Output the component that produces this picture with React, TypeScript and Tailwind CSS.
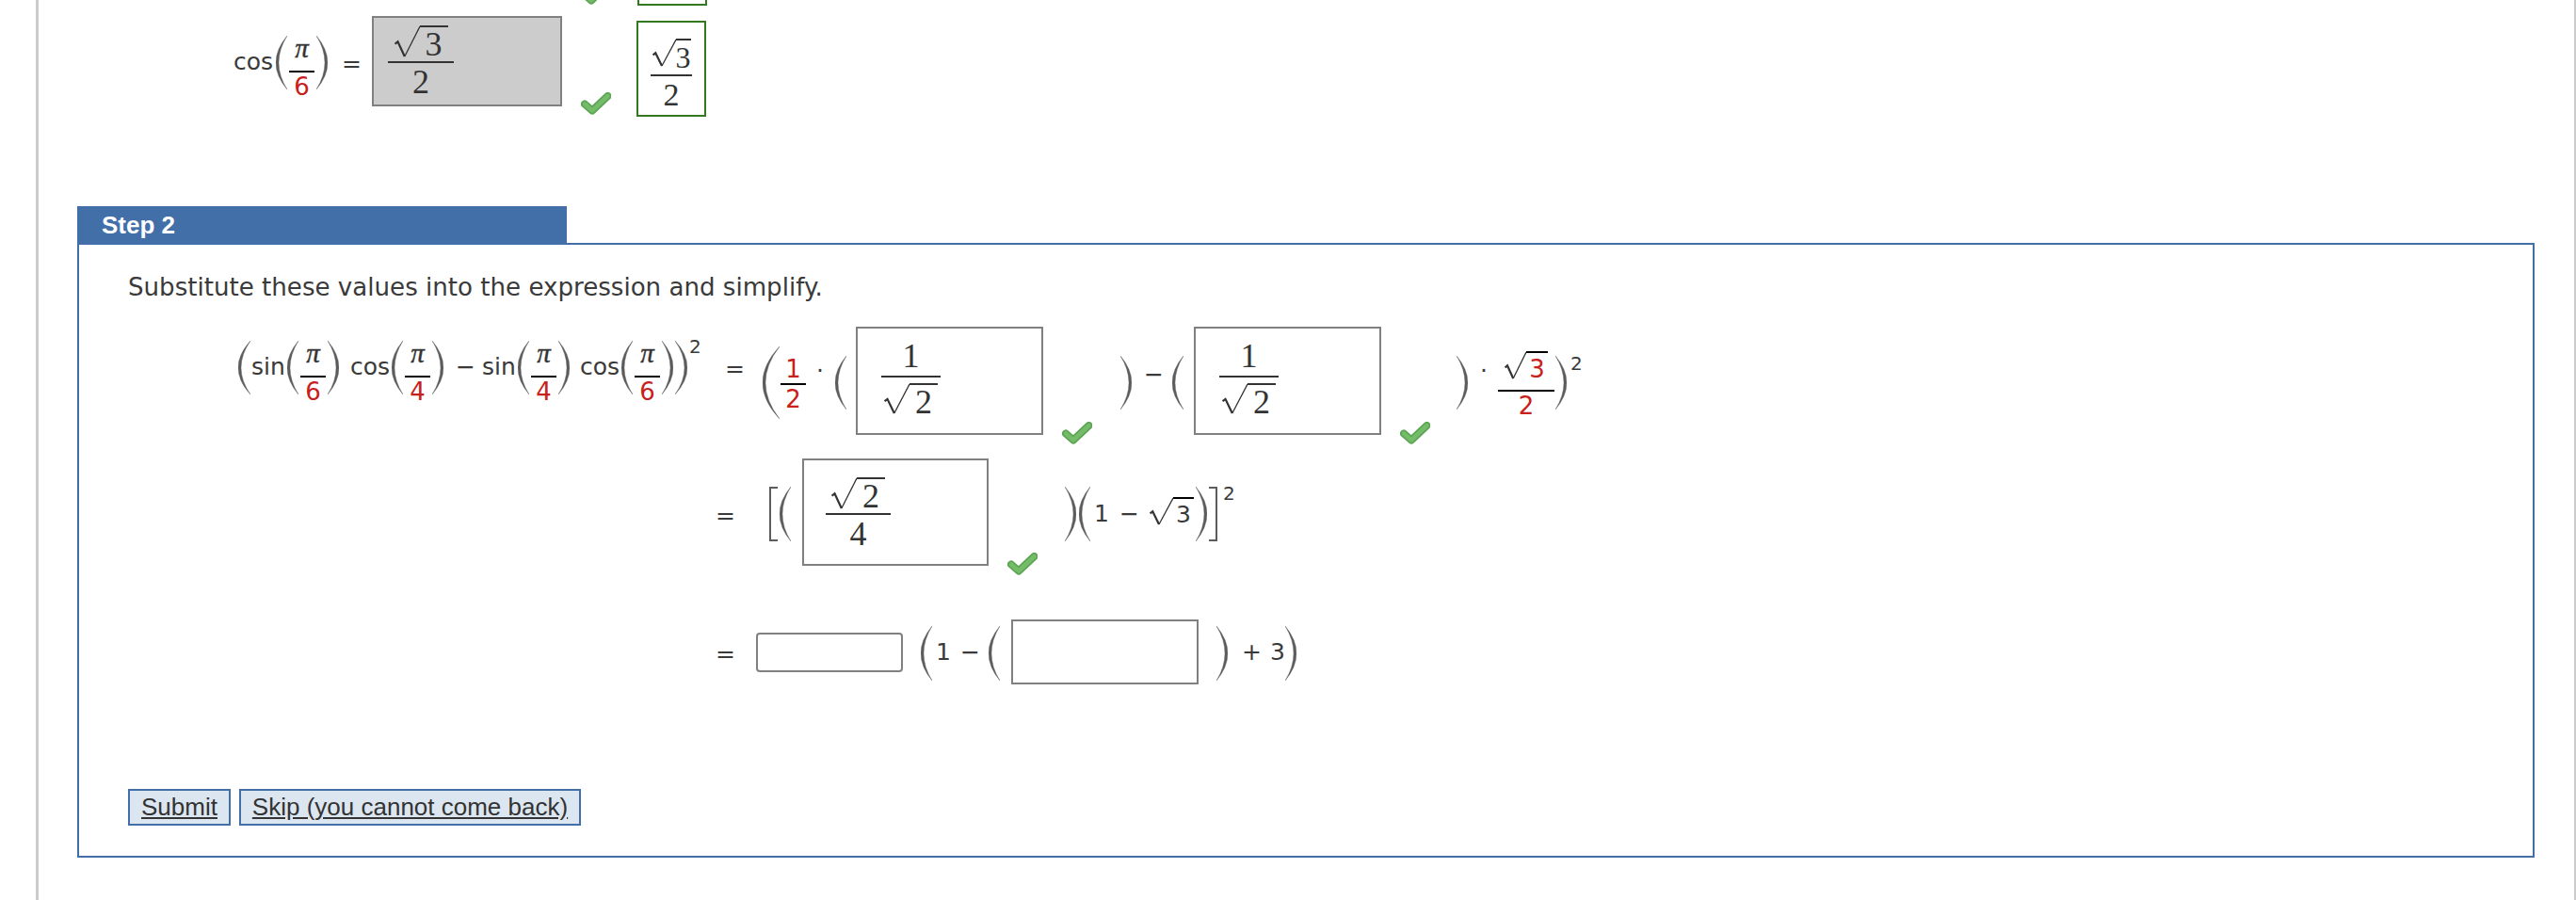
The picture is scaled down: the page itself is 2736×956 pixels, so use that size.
import type { ReactNode } from "react"

const sans = "font-['DejaVu_Sans',sans-serif]"
const serif = "font-['Liberation_Serif',serif]"

function Paren({ w = 12, h = 57, right = false, className = "" }: { w?: number; h?: number; right?: boolean; className?: string }) {
  return (
    <svg width={w} height={h} viewBox={`0 0 ${w} ${h}`} className={`shrink-0 ${right ? "-scale-x-100" : ""} ${className}`}>
      <path d={`M${w} 0 Q${-w} ${h / 2} ${w} ${h} Q${-w + 6} ${h / 2} ${w} 0 Z`} fill="#5c5c5c" stroke="#5c5c5c" strokeWidth="0.4" />
    </svg>
  )
}

function Check({ className = "" }: { className?: string }) {
  return (
    <svg width="32" height="24" viewBox="0 0 32 24" className={`shrink-0 ${className}`}>
      <path d="M4 12.5 L12 19.5 L28.5 4" fill="none" stroke="#5ca553" strokeWidth="8" strokeLinecap="round" strokeLinejoin="round" />
      <path d="M4 12.5 L12 19.5 L28.5 4" fill="none" stroke="#74bb6a" strokeWidth="4.5" strokeLinecap="round" strokeLinejoin="round" />
    </svg>
  )
}

// sans text on a 30px line, baseline sits 24px down
function T({ className = "", children }: { className?: string; children: ReactNode }) {
  return <div className={`h-[30px] shrink-0 text-center text-[25px] leading-[30px] whitespace-nowrap text-[#3a3a3a] ${sans} ${className}`}>{children}</div>
}

function Sup({ className = "" }: { className?: string }) {
  return <div className={`h-[24px] w-[12px] shrink-0 text-[20px] leading-[24px] text-[#3a3a3a] ${sans} ${className}`}>2</div>
}

function Fn({ name, den, nameClass }: { name: string; den: string; nameClass: string }) {
  return (
    <div className="flex shrink-0 items-start">
      <T className={`mt-[13px] ${nameClass}`}>{name}</T>
      <Paren className="ml-[3px]" />
      <div className="ml-[2px] flex w-[27px] flex-col items-center">
        <div className={`flex h-[37px] items-end pb-[9px] text-[29px] leading-[30px] text-[#333] italic [-webkit-text-stroke:0.4px_#333] ${serif}`}>π</div>
        <div className="h-[2px] w-full bg-black" />
        <div className={`h-[30px] text-[26px] leading-[30px] text-[#c8201a] ${sans}`}>{den}</div>
      </div>
      <Paren right className="ml-[2px]" />
    </div>
  )
}

function Radical({ w, h }: { w: number; h: number }) {
  return (
    <svg width={w} height={h} viewBox={`0 0 ${w} ${h}`} className="shrink-0">
      <path d={`M0.5 ${h * 0.58} L${w * 0.13} ${h * 0.51} L${w * 0.4} ${h - 1}`} fill="none" stroke="#333" strokeWidth="2.2" />
      <path d={`M${w * 0.4} ${h - 1} L${w} 1`} fill="none" stroke="#333" strokeWidth="1.3" />
    </svg>
  )
}

function Sqrt({ digit, w = 27, h = 34, className = "" }: { digit: string; w?: number; h?: number; className?: string }) {
  return (
    <div className="flex shrink-0 items-start">
      <Radical w={w} h={h} />
      <div className={`border-t-2 border-[#333] ${className}`}>{digit}</div>
    </div>
  )
}

function AnswerFrac({ top, bottom, slot, bar }: { top: ReactNode; bottom: ReactNode; slot: string; bar: string }) {
  return (
    <div className={`flex flex-col items-center text-[#333] ${serif} ${bar}`}>
      <div className={`flex items-end justify-center ${slot}`}>{top}</div>
      <div className="h-[2px] w-full shrink-0 bg-[#333]" />
      {bottom}
    </div>
  )
}

const digit = "text-[36px] leading-[36px]"

function AnswerBox({ className = "", children }: { className?: string; children?: ReactNode }) {
  return <div className={`flex shrink-0 items-start border-2 border-[#808080] ${className}`}>{children}</div>
}

export default function App() {
  return (
    <div className="h-[956px] w-[2736px] overflow-hidden bg-white pl-[38px]">
      <div className="h-full w-[2698px] border-r-2 border-l-[3px] border-[#ccc]">
        {/* tail of the previous answer row */}
        <div className="flex h-[7px] items-start overflow-hidden">
          <Check className="mt-[-19px] ml-[575px]" />
          <div className="mt-[-24px] ml-[29px] h-[30px] w-[74px] shrink-0 border-2 border-[#33791f]" />
        </div>

        <div className="flex h-[212px] items-start">
          <div className="mt-[31px] ml-[207px]">
            <Fn name="cos" den="6" nameClass="w-[42px]" />
          </div>
          <T className="mt-[46px] ml-[15px] w-[17px]">=</T>
          <AnswerBox className="mt-[10px] ml-[15px] h-[96px] w-[202px] bg-[#ccc] pt-[6px] pl-[15px]">
            <AnswerFrac
              bar="w-[70px]"
              slot="h-[40px]"
              top={<Sqrt digit="3" className={`px-[6px] ${digit}`} />}
              bottom={<div className={`mt-[2px] ${digit}`}>2</div>}
            />
          </AnswerBox>
          <Check className="mt-[91px] ml-[20px]" />
          <div className="mt-[15px] ml-[27px] flex h-[102px] w-[74px] shrink-0 justify-center border-2 border-[#33791f] pt-[12px]">
            <AnswerFrac
              bar="w-[44px]"
              slot="h-[43px]"
              top={<Sqrt digit="3" w={25} h={30} className="text-[32px] leading-[36px]" />}
              bottom={<div className="mt-[2px] text-[34px] leading-[36px]">2</div>}
            />
          </div>
        </div>

        <div className="relative z-10 ml-[41px] flex h-[41px] w-[520px] items-center bg-[#426fa8] pl-[26px] font-['Liberation_Sans',sans-serif] text-[26px] font-bold text-white">
          Step 2
        </div>

        <div className="mt-[-2px] ml-[41px] h-[653px] w-[2610px] border-2 border-[#426fa8] pt-[29px] pl-[52px]">
          <div className={`h-[32px] text-[26.1px] leading-[32px] whitespace-nowrap text-[#3a3a3a] ${sans}`}>
            Substitute these values into the expression and simplify.
          </div>

          {/* first line of the working */}
          <div className="mt-[26px] flex h-[140px] items-start">
            <Paren w={13} className="mt-[15px] ml-[117px]" />
            <div className="mt-[15px] ml-[1px]">
              <Fn name="sin" den="6" nameClass="w-[35px]" />
            </div>
            <div className="mt-[15px] ml-[12px]">
              <Fn name="cos" den="4" nameClass="w-[41px]" />
            </div>
            <T className="mt-[28px] ml-[13px] w-[16px]">−</T>
            <div className="mt-[15px] ml-[12px]">
              <Fn name="sin" den="4" nameClass="w-[35px]" />
            </div>
            <div className="mt-[15px] ml-[11px]">
              <Fn name="cos" den="6" nameClass="w-[41px]" />
            </div>
            <Paren w={13} right className="mt-[15px] ml-[2px]" />
            <Sup className="mt-[9px] ml-[2px]" />
            <T className="mt-[30px] ml-[26px] w-[16px]">=</T>
            <Paren w={18} h={77} className="mt-[21px] ml-[24px]" />
            <div className={`mt-[24px] ml-[1px] flex w-[27px] shrink-0 flex-col items-center text-[26px] leading-[30px] text-[#c8201a] ${sans}`}>
              <div className="flex h-[36px] items-end">1</div>
              <div className="h-[2px] w-full bg-black" />
              <div>2</div>
            </div>
            <T className="mt-[32px] ml-[11px] w-[6px]">·</T>
            <Paren className="mt-[31px] ml-[14px]" />
            <AnswerBox className="ml-[10px] h-[115px] w-[199px] pl-[25px]">
              <AnswerFrac
                bar="w-[63px]"
                slot="h-[50px] pb-[3px]"
                top={<div className={digit}>1</div>}
                bottom={<div className="mt-[6px]"><Sqrt digit="2" h={33} className={`px-[6px] ${digit}`} /></div>}
              />
            </AnswerBox>
            <Check className="mt-[101px] ml-[20px]" />
            <Paren right className="mt-[31px] ml-[30px]" />
            <T className="mt-[36px] ml-[13px] w-[18px]">−</T>
            <Paren className="mt-[31px] ml-[12px]" />
            <AnswerBox className="ml-[11px] h-[115px] w-[199px] pl-[25px]">
              <AnswerFrac
                bar="w-[63px]"
                slot="h-[50px] pb-[3px]"
                top={<div className={digit}>1</div>}
                bottom={<div className="mt-[6px]"><Sqrt digit="2" h={33} className={`px-[6px] ${digit}`} /></div>}
              />
            </AnswerBox>
            <Check className="mt-[101px] ml-[20px]" />
            <Paren right className="mt-[31px] ml-[28px]" />
            <T className="mt-[32px] ml-[13px] w-[6px]">·</T>
            <div className={`mt-[26px] ml-[13px] flex w-[60px] shrink-0 flex-col items-center text-[26px] leading-[30px] text-[#c8201a] ${sans}`}>
              <div className="flex h-[41px] items-start">
                <Radical w={23} h={30} />
                <div className="mt-0 border-t-2 border-black px-[3px] pt-[2px]">3</div>
              </div>
              <div className="h-[2px] w-full bg-black" />
              <div>2</div>
            </div>
            <Paren right className="mt-[31px] ml-[1px]" />
            <Sup className="mt-[27px] ml-[4px]" />
          </div>

          {/* second line */}
          <div className="flex h-[171px] items-start">
            <T className="mt-[46px] ml-[624px] w-[17px]">=</T>
            <div className="mt-[30px] ml-[40px] h-[58px] w-[9px] shrink-0 border-y-2 border-l-2 border-[#5c5c5c]" />
            <Paren h={58} className="mt-[30px] ml-[2px]" />
            <AnswerBox className="ml-[12px] h-[114px] w-[198px] pt-[15px] pl-[23px]">
              <AnswerFrac
                bar="w-[69px]"
                slot="h-[41px]"
                top={<Sqrt digit="2" className={`px-[6px] ${digit}`} />}
                bottom={<div className={`mt-[2px] ${digit}`}>4</div>}
              />
            </AnswerBox>
            <Check className="mt-[100px] ml-[20px]" />
            <Paren h={58} right className="mt-[30px] ml-[29px]" />
            <Paren h={58} className="mt-[30px] ml-[3px]" />
            <T className="mt-[44px] ml-[4px] w-[14px]">1</T>
            <T className="mt-[44px] ml-[13px] w-[18px]">−</T>
            <div className={`mt-[41px] ml-[14px] flex shrink-0 items-start text-[25px] leading-[30px] text-[#3a3a3a] ${sans}`}>
              <Radical w={25} h={30} />
              <div className="border-t-2 border-black px-[3px] pt-[2px]">3</div>
            </div>
            <Paren h={58} right className="mt-[30px] ml-[2px]" />
            <div className="mt-[30px] ml-[2px] h-[58px] w-[9px] shrink-0 border-y-2 border-r-2 border-[#5c5c5c]" />
            <Sup className="mt-[25px] ml-[6px]" />
          </div>

          {/* third line */}
          <div className="flex h-[180px] items-start">
            <T className="mt-[22px] ml-[624px] w-[17px]">=</T>
            <div className="mt-[14px] ml-[26px] h-[42px] w-[156px] shrink-0 rounded-[4px] border-2 border-[#808080]" />
            <Paren h={58} className="mt-[7px] ml-[19px]" />
            <T className="mt-[20px] ml-[4px] w-[14px]">1</T>
            <T className="mt-[20px] ml-[12px] w-[18px]">−</T>
            <Paren h={58} className="mt-[7px] ml-[12px]" />
            <AnswerBox className="ml-[12px] h-[69px] w-[199px]" />
            <Paren h={58} right className="mt-[7px] ml-[19px]" />
            <T className="mt-[20px] ml-[15px] w-[18px]">+</T>
            <T className="mt-[20px] ml-[12px] w-[15px]">3</T>
            <Paren h={58} right className="mt-[7px] ml-[1px]" />
          </div>

          <div className="flex items-start font-['Liberation_Sans',sans-serif] text-[26px] leading-[35px] text-[#333] underline">
            <button className="h-[39px] w-[109px] border-2 border-[#426fa8] bg-[#dce6f0]">Submit</button>
            <button className="ml-[9px] h-[39px] w-[363px] border-2 border-[#426fa8] bg-[#dce6f0] whitespace-nowrap">Skip (you cannot come back)</button>
          </div>
        </div>
      </div>
    </div>
  )
}
